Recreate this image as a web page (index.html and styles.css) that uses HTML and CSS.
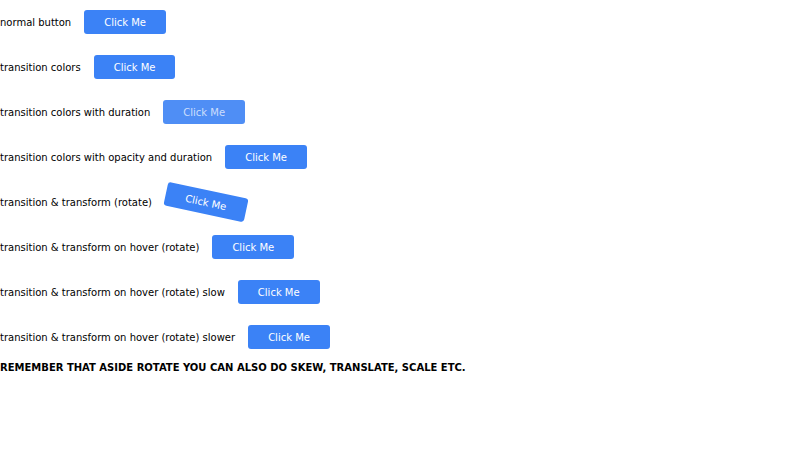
FILE: index.html
```html
<!DOCTYPE html>
<html>
<head>
<meta charset="utf-8">
<link rel="stylesheet" href="styles.css">
</head>
<body>
<div class="list">
  <div class="row"><span class="label">normal button</span><button class="btn">Click Me</button></div>
  <div class="row"><span class="label">transition colors</span><button class="btn">Click Me</button></div>
  <div class="row"><span class="label">transition colors with duration</span><button class="btn btn-fade">Click Me</button></div>
  <div class="row"><span class="label">transition colors with opacity and duration</span><button class="btn">Click Me</button></div>
  <div class="row"><span class="label">transition &amp; transform (rotate)</span><button class="btn btn-rotate">Click Me</button></div>
  <div class="row"><span class="label">transition &amp; transform on hover (rotate)</span><button class="btn">Click Me</button></div>
  <div class="row"><span class="label">transition &amp; transform on hover (rotate) slow</span><button class="btn">Click Me</button></div>
  <div class="row"><span class="label">transition &amp; transform on hover (rotate) slower</span><button class="btn">Click Me</button></div>
</div>
<p class="note">REMEMBER THAT ASIDE ROTATE YOU CAN ALSO DO SKEW, TRANSLATE, SCALE ETC.</p>
</body>
</html>
```
FILE: styles.css
```css
html, body {
  margin: 0;
  padding: 0;
  background: #ffffff;
}
body {
  font-family: "DejaVu Sans", sans-serif;
  font-size: 10px;
  line-height: 12px;
  color: #000000;
}
.list {
  display: flex;
  flex-direction: column;
  gap: 21px;
  padding-top: 10px;
}
.row {
  display: flex;
  align-items: center;
  height: 24px;
}
.label {
  white-space: nowrap;
  padding-top: 1px;
}
.btn {
  margin-left: 13px;
  font-family: "DejaVu Sans", sans-serif;
  font-size: 10px;
  line-height: 12px;
  padding: 7px 20px 5px;
  border: none;
  border-radius: 3px;
  background: #3b82f6;
  color: #ffffff;
  height: 24px;
}
.btn-fade {
  background: #4f8ef5;
  color: rgba(255, 255, 255, 0.72);
}
.btn-rotate {
  transform: rotate(12deg);
}
.note {
  margin: 13px 0 0 0;
  font-weight: bold;
  font-size: 10px;
  line-height: 12px;
}
```
